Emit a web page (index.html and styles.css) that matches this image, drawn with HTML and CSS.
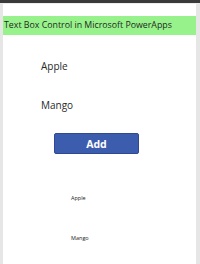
FILE: index.html
```html
<!DOCTYPE html>
<html lang="en">
<head>
    <meta charset="UTF-8">
    <title>Text Box Control</title>
    <link rel="stylesheet" href="styles.css">
</head>
<body>
    <div class="top-bar"></div>
    <div class="screen">
        <div class="title-bar">Text Box Control in Microsoft PowerApps</div>
        <div class="field">Apple</div>
        <div class="field">Mango</div>
        <button class="add-button">Add</button>
        <div class="small-label first">Apple</div>
        <div class="small-label">Mango</div>
    </div>
</body>
</html>
```

FILE: styles.css
```css
html, body {
    margin: 0;
    padding: 0;
    width: 200px;
    height: 264px;
    overflow: hidden;
    background-color: #ffffff;
    font-family: "Open Sans", "Noto Sans", sans-serif;
    color: #222222;
}
.top-bar {
    height: 3px;
    background-color: #3a3a3a;
}
.screen {
    height: 261px;
    border-left: 3px solid #e6e6e6;
    border-right: 4px solid #e6e6e6;
    border-top: 1px solid #eeeeee;
    box-sizing: border-box;
    padding-top: 12px;
    display: flex;
    flex-direction: column;
}
.title-bar {
    background-color: #98f28c;
    height: 19px;
    line-height: 19px;
    font-size: 8.8px;
    padding-left: 1px;
    color: #1e2a1e;
}
.field {
    font-size: 10px;
    margin-left: 38px;
    margin-top: 25px;
    line-height: 12px;
    color: #2a2a2a;
}
.field + .field {
    margin-top: 27px;
}
.add-button {
    margin: 22px 0 0 51px;
    width: 85px;
    height: 21px;
    padding: 0;
    background-color: #3c5cae;
    border: 1px solid #2f4a91;
    border-radius: 2px;
    color: #ffffff;
    font-family: "Open Sans", "Noto Sans", sans-serif;
    font-weight: bold;
    font-size: 10.5px;
}
.small-label {
    font-size: 5.5px;
    margin-left: 68px;
    margin-top: 33px;
    line-height: 7px;
    color: #222222;
}
.small-label.first {
    margin-top: 41px;
}
```
